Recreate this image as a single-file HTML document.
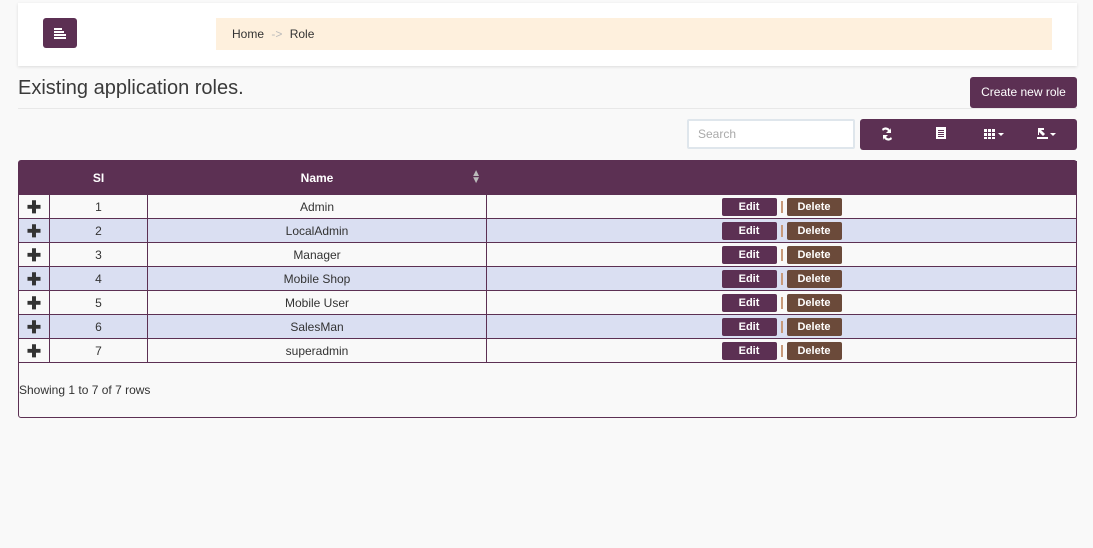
<!DOCTYPE html>
<html><head><style>
*{box-sizing:border-box;margin:0;padding:0}
body{width:1093px;height:548px;background:#f9f9f9;font-family:"Liberation Sans",sans-serif;font-size:12px;color:#333;position:relative;overflow:hidden}
.abs{position:absolute}
.hdr{left:18px;top:3px;width:1059px;height:63px;background:#fff;box-shadow:0 1px 3px rgba(0,0,0,.12)}
.menu{left:43px;top:18px;width:34px;height:30px;background:#5c3053;border-radius:3px}
.bc{left:216px;top:18px;width:836px;height:32px;background:#fef0dd;font-size:12px;line-height:32px;padding-left:16px;color:#333}
h1{position:absolute;left:18px;top:77px;font-weight:normal;font-size:20px;color:#3a3a3a}
.hr{left:18px;top:108px;width:1059px;height:1px;background:#e8e8e8}
.btn{background:#5c3053;color:#fff;border-radius:3px;text-align:center}
.search{left:687px;top:119px;width:168px;height:30px;border:2px solid #dfe6ec;background:#fff;border-radius:2px;color:#aaa;padding:6px 9px;font-size:12px}
.tb{left:860px;top:119px;width:217px;height:31px}
table{position:absolute;left:18px;top:161px;width:1059px;border-collapse:collapse}
.wrap{left:18px;top:160px;width:1059px;height:258px;border:1px solid #5c3053;border-radius:3px}
th{background:#5c3053;color:#fff;height:33px;font-weight:bold;font-size:12px;border-right:1px solid #5c3053;padding-top:2px}
td{height:24px;border:1px solid #5c3053;text-align:center;font-size:12px;color:#333;padding-top:1px}
tr.alt td{background:#dadff2}
tr.nor td{background:#f9f9f9}
.plus{font-weight:bold;font-size:17px;color:#333;padding-top:4px;line-height:18px}
.e,.d{display:inline-block;width:55px;height:18px;line-height:18px;color:#fff;font-weight:bold;font-size:11px;border-radius:2px;vertical-align:middle}
.e{background:#5c3053}.d{background:#6b4a3a}
.sep{display:inline-block;width:2px;height:12px;background:#c89a7a;margin:0 4px;vertical-align:middle}
</style></head><body>
<div class="abs hdr"></div>
<div class="abs menu"><svg width="34" height="30"><g fill="#fff"><rect x="11" y="10" width="8" height="2"/><rect x="11" y="13" width="10" height="2"/><rect x="11" y="16" width="12" height="2"/><rect x="11" y="19" width="12" height="2"/></g></svg></div>
<div class="abs bc">Home <span style="color:#bbb;margin:0 4px">-&gt;</span> Role</div>
<h1>Existing application roles.</h1>
<div class="abs hr"></div>
<div class="abs btn" style="left:970px;top:77px;width:107px;height:31px;line-height:31px;font-size:12px">Create new role</div>
<div class="abs search">Search</div>
<div class="abs btn tb"><svg width="217" height="31" fill="#fff">
<path d="M22 10a5 5 0 0 1 8 1l1-2v5h-5l2-2a3 3 0 0 0-5 0zM32 20a5 5 0 0 1-8-1l-1 2v-5h5l-2 2a3 3 0 0 0 5 0z"/>
<rect x="76" y="8" width="10" height="12"/><g fill="#5c3053"><rect x="78" y="11" width="6" height="1"/><rect x="78" y="13" width="6" height="1"/><rect x="78" y="15" width="6" height="1"/><rect x="78" y="17" width="6" height="1"/></g>
<g><rect x="124" y="10" width="3" height="3"/><rect x="128" y="10" width="3" height="3"/><rect x="132" y="10" width="3" height="3"/><rect x="124" y="14" width="3" height="3"/><rect x="128" y="14" width="3" height="3"/><rect x="132" y="14" width="3" height="3"/><rect x="124" y="18" width="3" height="2"/><rect x="128" y="18" width="3" height="2"/><rect x="132" y="18" width="3" height="2"/></g>
<path d="M138 14h6l-3 3z"/>
<path d="M178 9h6v2h-3l4 4-2 2-4-4v3h-1zM177 18h11v2h-11z"/><path d="M190 14h6l-3 3z"/>
</svg></div>
<div class="abs wrap"></div>
<table>
<tr><th style="width:31px"></th><th style="width:98px">SI</th><th style="width:339px;position:relative">Name<span style="position:absolute;right:5px;top:9px;color:#bbb;font-size:10px;line-height:7px">▲<br>▼</span></th><th></th></tr>
<tr class="nor"><td class="plus">✚</td><td>1</td><td>Admin</td><td><span class="e">Edit</span><span class="sep"></span><span class="d">Delete</span></td></tr>
<tr class="alt"><td class="plus">✚</td><td>2</td><td>LocalAdmin</td><td><span class="e">Edit</span><span class="sep"></span><span class="d">Delete</span></td></tr>
<tr class="nor"><td class="plus">✚</td><td>3</td><td>Manager</td><td><span class="e">Edit</span><span class="sep"></span><span class="d">Delete</span></td></tr>
<tr class="alt"><td class="plus">✚</td><td>4</td><td>Mobile Shop</td><td><span class="e">Edit</span><span class="sep"></span><span class="d">Delete</span></td></tr>
<tr class="nor"><td class="plus">✚</td><td>5</td><td>Mobile User</td><td><span class="e">Edit</span><span class="sep"></span><span class="d">Delete</span></td></tr>
<tr class="alt"><td class="plus">✚</td><td>6</td><td>SalesMan</td><td><span class="e">Edit</span><span class="sep"></span><span class="d">Delete</span></td></tr>
<tr class="nor"><td class="plus">✚</td><td>7</td><td>superadmin</td><td><span class="e">Edit</span><span class="sep"></span><span class="d">Delete</span></td></tr>
</table>
<div class="abs" style="left:19px;top:383px;font-size:12px">Showing 1 to 7 of 7 rows</div>
</body></html>
